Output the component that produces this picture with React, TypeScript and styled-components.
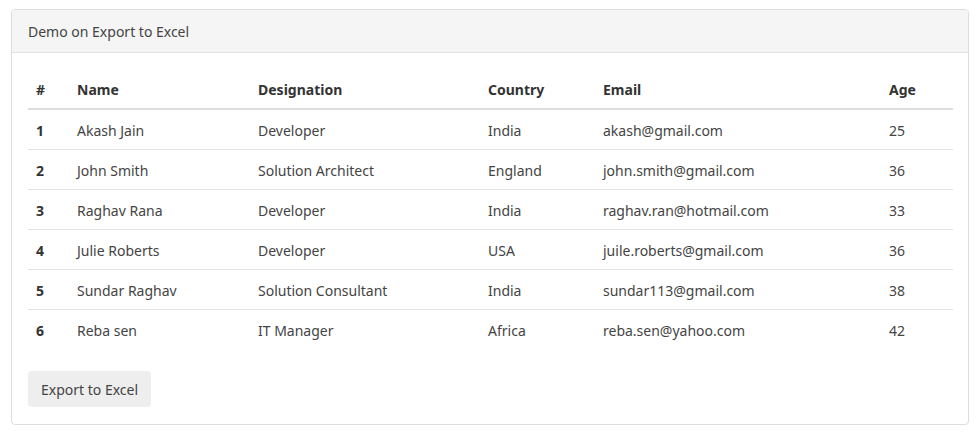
import styled, { createGlobalStyle } from "styled-components";

const GlobalStyle = createGlobalStyle`
  body {
    margin: 0;
    background: #fff;
    font-family: "Noto Sans", "Open Sans", sans-serif;
    font-size: 14px;
    color: #444;
  }
`;

const rows = [
  [1, "Akash Jain", "Developer", "India", "akash@gmail.com", 25],
  [2, "John Smith", "Solution Architect", "England", "john.smith@gmail.com", 36],
  [3, "Raghav Rana", "Developer", "India", "raghav.ran@hotmail.com", 33],
  [4, "Julie Roberts", "Developer", "USA", "juile.roberts@gmail.com", 36],
  [5, "Sundar Raghav", "Solution Consultant", "India", "sundar113@gmail.com", 38],
  [6, "Reba sen", "IT Manager", "Africa", "reba.sen@yahoo.com", 42],
];

const widths = [41, 181, 230, 115, 286, 72];
const heads = ["#", "Name", "Designation", "Country", "Email", "Age"];

export default function App() {
  return (
    <Page>
      <GlobalStyle />
      <Card>
        <CardHeader>Demo on Export to Excel</CardHeader>
        <CardBody>
          <Table>
            <colgroup>
              {widths.map((w, i) => (
                <col key={i} style={{ width: w }} />
              ))}
            </colgroup>
            <thead>
              <tr>
                {heads.map((h) => (
                  <Th key={h}>{h}</Th>
                ))}
              </tr>
            </thead>
            <tbody>
              {rows.map((r) => (
                <Tr key={r[0]}>
                  {r.map((c, i) => (
                    <Td key={i} $bold={i === 0}>
                      {c}
                    </Td>
                  ))}
                </Tr>
              ))}
            </tbody>
          </Table>
          <Button>Export to Excel</Button>
        </CardBody>
      </Card>
    </Page>
  );
}

const Page = styled.div`
  padding: 9px 11px;
`;

const Card = styled.div`
  border: 1px solid #ddd;
  border-radius: 4px;
  overflow: hidden;
`;

const CardHeader = styled.div`
  background: #f5f5f5;
  border-bottom: 1px solid #e3e3e3;
  height: 42px;
  display: flex;
  align-items: center;
  padding: 0 16px;
`;

const CardBody = styled.div`
  padding: 17px 16px 17px 16px;
`;

const Table = styled.table`
  width: 925px;
  border-collapse: collapse;
  table-layout: fixed;
`;

const Th = styled.th`
  text-align: left;
  font-weight: 700;
  color: #333;
  height: 38px;
  padding: 0 8px;
  border-bottom: 2px solid #ddd;
`;

const Tr = styled.tr`
  & + & td {
    border-top: 1px solid #e3e3e3;
  }
`;

const Td = styled.td<{ $bold?: boolean }>`
  height: 38px;
  padding: 1px 8px 0;
  font-weight: ${(p) => (p.$bold ? 700 : 400)};
  color: ${(p) => (p.$bold ? "#333" : "#444")};
`;

const Button = styled.button`
  margin-top: 22px;
  height: 36px;
  padding: 0 13px;
  border: none;
  border-radius: 4px;
  background: #eee;
  color: #444;
  font: inherit;
`;
